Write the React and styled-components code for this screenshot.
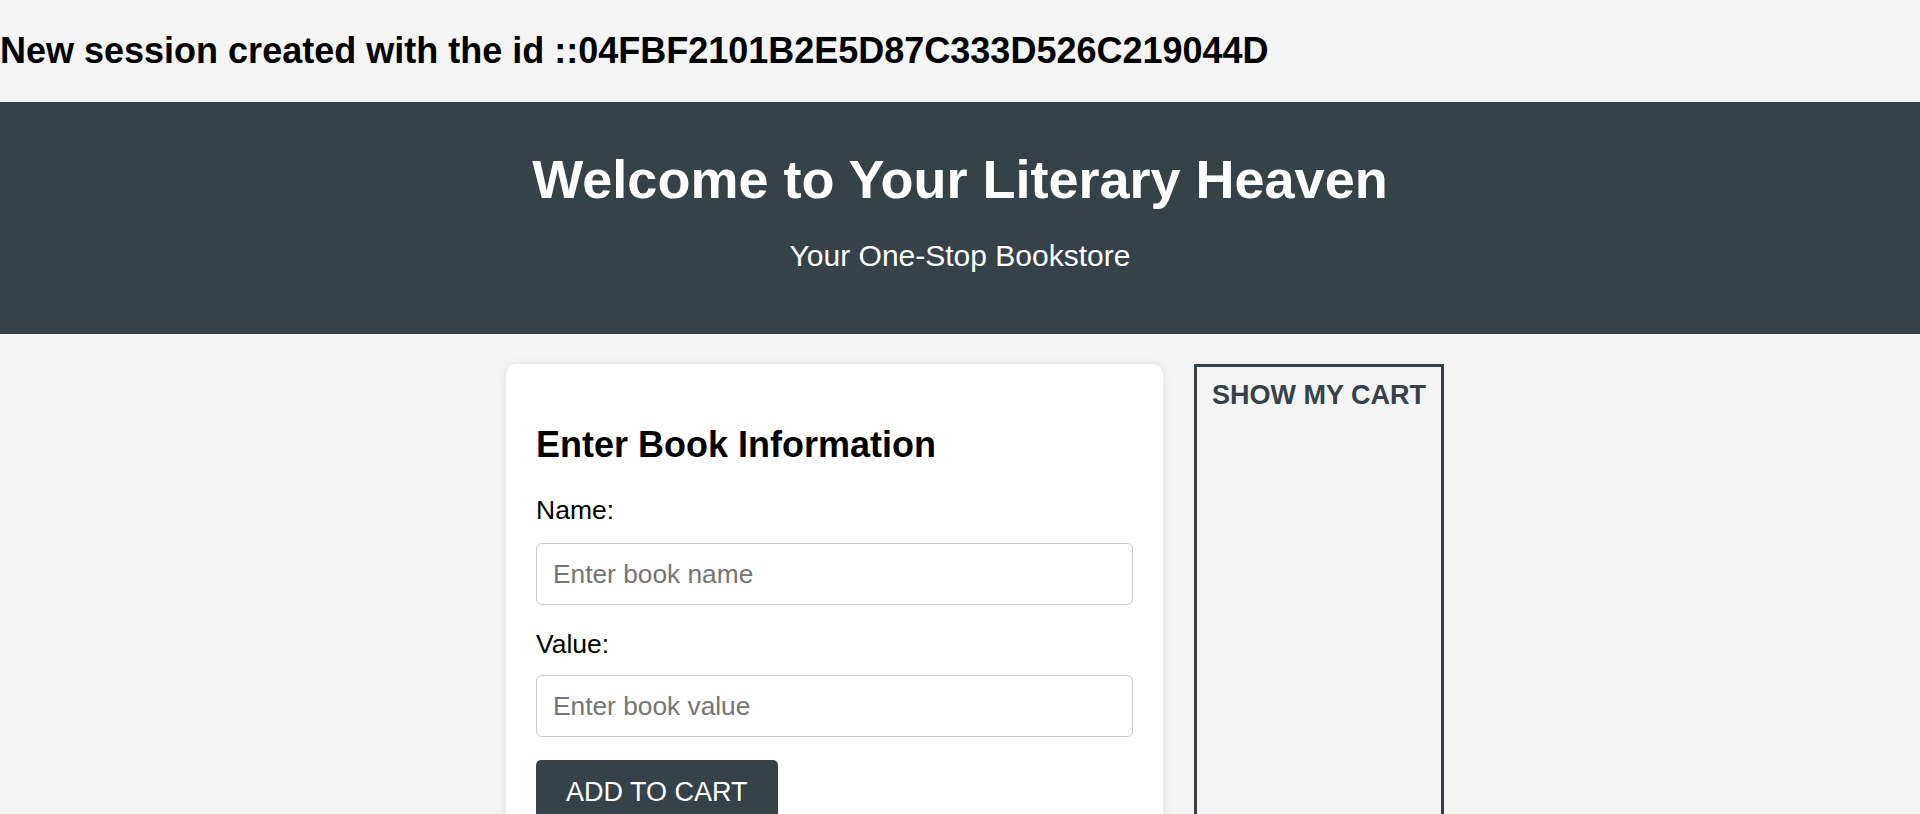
import React from 'react'
import styled, { createGlobalStyle } from 'styled-components'

const GlobalStyle = createGlobalStyle`
    body {
        margin: 0;
        background: #f4f4f4;
        font-family: "Liberation Sans", Arial, sans-serif;
        color: #000;
    }
`

const SessionNotice = styled.h1`
    margin: 30px 0 31px;
    font-size: 36px;
    line-height: 41px;
    font-weight: 700;
`

const Header = styled.header`
    background: #36424a;
    color: #fff;
    text-align: center;
    padding: 46px 0 61px;
`

const Title = styled.h1`
    margin: 0 0 28px;
    font-size: 54px;
    line-height: 62px;
    font-weight: 700;
`

const Subtitle = styled.p`
    margin: 0;
    font-size: 30px;
    line-height: 35px;
`

const Main = styled.main`
    display: flex;
    justify-content: center;
    align-items: flex-start;
    gap: 31px;
    padding-left: 30px;
    margin-top: 30px;
`

const Card = styled.section`
    box-sizing: border-box;
    width: 657px;
    min-height: 520px;
    background: #fff;
    border-radius: 10px;
    padding: 30px;
    box-shadow: 0 0 10px rgba(0, 0, 0, 0.08);
`

const CardTitle = styled.h2`
    margin: 30px 0 30px;
    font-size: 36px;
    line-height: 41px;
    font-weight: 700;
`

const Label = styled.label`
    display: block;
    font-size: 26.5px;
    line-height: 30px;
    margin-bottom: ${props => props.tight ? '16px' : '18px'};
`

const Input = styled.input`
    display: block;
    box-sizing: border-box;
    width: 100%;
    height: 62px;
    padding: 15px 16px;
    margin-bottom: ${props => props.last ? '23px' : '24px'};
    border: 1px solid #ccc;
    border-radius: 6px;
    font-family: inherit;
    font-size: 26.3px;
    background: #fff;
    outline: none;

    &::placeholder {
        color: #757575;
    }
`

const Button = styled.button`
    background: #36424a;
    color: #fff;
    border: none;
    border-radius: 5px;
    padding: 17px 30px;
    font-family: inherit;
    font-size: 27px;
    line-height: 30px;
    cursor: pointer;
`

const CartBox = styled.aside`
    box-sizing: border-box;
    width: 250px;
    min-height: 560px;
    border: 3px solid #36424a;
    padding: 13px 10px;
    text-align: center;
`

const CartTitle = styled.div`
    color: #36424a;
    font-size: 27px;
    line-height: 31px;
    font-weight: 700;
`

export default function App() {
    return (
        <>
            <GlobalStyle />
            <SessionNotice>New session created with the id ::04FBF2101B2E5D87C333D526C219044D</SessionNotice>
            <Header>
                <Title>Welcome to Your Literary Heaven</Title>
                <Subtitle>Your One-Stop Bookstore</Subtitle>
            </Header>
            <Main>
                <Card>
                    <CardTitle>Enter Book Information</CardTitle>
                    <Label htmlFor="bookName">Name:</Label>
                    <Input id="bookName" type="text" placeholder="Enter book name" />
                    <Label htmlFor="bookValue" tight>Value:</Label>
                    <Input id="bookValue" type="text" placeholder="Enter book value" last />
                    <Button>ADD TO CART</Button>
                </Card>
                <CartBox>
                    <CartTitle>SHOW MY CART</CartTitle>
                </CartBox>
            </Main>
        </>
    )
}
